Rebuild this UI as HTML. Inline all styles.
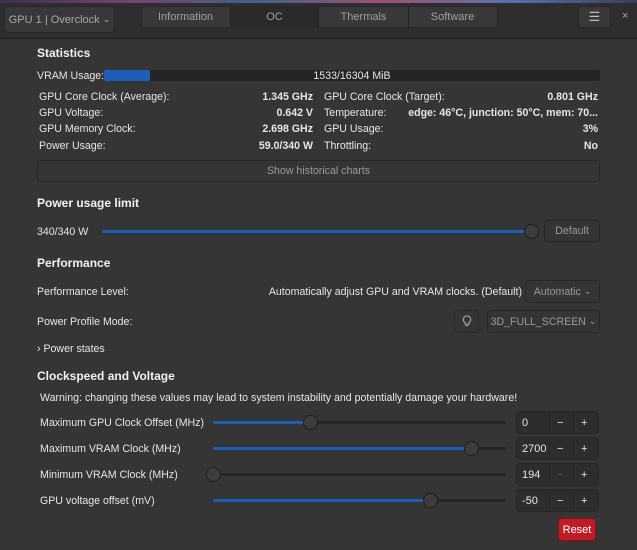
<!DOCTYPE html>
<html><head><meta charset="utf-8"><style>
*{margin:0;padding:0;box-sizing:border-box}
body{width:637px;height:550px;background:#353535;font-family:"Liberation Sans",sans-serif;font-size:10.6px;color:#e6e6e6;position:relative;overflow:hidden}
.a{position:absolute;white-space:nowrap}
.h{font-weight:bold;font-size:12px;color:#f2f2f2}
.b{font-weight:bold}
.r{text-align:right}
.btn{position:absolute;border:1px solid #282828;background:#383838;border-radius:4px;color:#9a9a9a;display:flex;align-items:center;justify-content:center;white-space:nowrap}
.track{position:absolute;height:3px;background:#262626;border-radius:2px}
.fill{position:absolute;height:3px;background:#1c5fb4;border-radius:2px}
.knob{position:absolute;width:15px;height:15px;border-radius:50%;background:#3c3c3c;border:1px solid #1f1f1f}
.spin{position:absolute;left:516px;width:83px;height:23px;background:#2d2d2d;border:1px solid #262626;border-radius:4px}
.spin span{position:absolute;top:5px;font-size:11px}
.spin i{position:absolute;top:0;width:1px;height:21px;background:#262626}
</style></head><body>
<div class="a" style="left:0;top:0;width:637px;height:3px;background:linear-gradient(90deg,#3a3050,#7a4070,#406090,#a05070,#5a70b0,#3a3a60)"></div>
<div class="a" style="left:0;top:3px;width:637px;height:36px;background:#2e2e2e;border-bottom:1px solid #202020"></div>
<div class="btn" style="left:4px;top:6px;width:111px;height:27px;color:#a8a8a8;font-size:11px">GPU 1 | Overclock&nbsp;<span style="font-size:9px">⌄</span></div>
<div class="btn" style="left:141px;top:6px;width:357px;height:22px"></div>
<div class="a" style="left:230px;top:7px;width:89px;height:20px;background:#2a2a2a;border-left:1px solid #242424;border-right:1px solid #242424"></div>
<div class="a" style="left:141px;top:11px;width:89px;text-align:center;color:#a0a0a0;font-size:11px">Information</div>
<div class="a" style="left:230px;top:11px;width:89px;text-align:center;color:#a0a0a0;font-size:11px">OC</div>
<div class="a" style="left:319px;top:11px;width:89px;text-align:center;color:#a0a0a0;font-size:11px">Thermals</div>
<div class="a" style="left:408px;top:11px;width:89px;text-align:center;color:#a0a0a0;font-size:11px">Software</div>
<div class="a" style="left:408px;top:7px;width:1px;height:20px;background:#242424"></div>
<div class="btn" style="left:578px;top:6px;width:33px;height:22px;color:#bbb;font-size:13px">☰</div>
<div class="a" style="left:622px;top:10px;color:#aaa;font-size:11px">×</div>

<div class="a h" style="left:37px;top:46px">Statistics</div>
<div class="a" style="left:37px;top:70px">VRAM Usage:</div>
<div class="a" style="left:104px;top:70px;width:496px;height:11px;background:#252525;border-radius:2px"></div>
<div class="a" style="left:104px;top:70px;width:46px;height:11px;background:#1c5fb4;border-radius:2px"></div>
<div class="a" style="left:104px;top:70px;width:496px;text-align:center">1533/16304 MiB</div>

<div class="a" style="left:39px;top:91px">GPU Core Clock (Average):</div>
<div class="a" style="left:39px;top:107px">GPU Voltage:</div>
<div class="a" style="left:39px;top:123px">GPU Memory Clock:</div>
<div class="a" style="left:39px;top:140px">Power Usage:</div>
<div class="a b r" style="right:324px;top:91px">1.345 GHz</div>
<div class="a b r" style="right:324px;top:107px">0.642 V</div>
<div class="a b r" style="right:324px;top:123px">2.698 GHz</div>
<div class="a b r" style="right:324px;top:140px">59.0/340 W</div>
<div class="a" style="left:324px;top:91px">GPU Core Clock (Target):</div>
<div class="a" style="left:324px;top:107px">Temperature:</div>
<div class="a" style="left:324px;top:123px">GPU Usage:</div>
<div class="a" style="left:324px;top:140px">Throttling:</div>
<div class="a b r" style="right:39px;top:91px">0.801 GHz</div>
<div class="a b r" style="right:39px;top:107px">edge: 46°C, junction: 50°C, mem: 70...</div>
<div class="a b r" style="right:39px;top:123px">3%</div>
<div class="a b r" style="right:39px;top:140px">No</div>
<div class="btn" style="left:37px;top:160px;width:563px;height:22px;background:#353535">Show historical charts</div>

<div class="a h" style="left:37px;top:196px">Power usage limit</div>
<div class="a" style="left:37px;top:226px">340/340 W</div>
<div class="fill" style="left:102px;top:230px;width:428px"></div>
<div class="knob" style="left:524px;top:224px"></div>
<div class="btn" style="left:544px;top:220px;width:56px;height:22px;background:#353535">Default</div>

<div class="a h" style="left:37px;top:256px">Performance</div>
<div class="a" style="left:37px;top:286px">Performance Level:</div>
<div class="a r" style="right:115px;top:286px">Automatically adjust GPU and VRAM clocks. (Default)</div>
<div class="btn" style="left:525px;top:280px;width:75px;height:23px;background:#353535">Automatic&nbsp;<span style="font-size:9px">⌄</span></div>
<div class="a" style="left:37px;top:316px">Power Profile Mode:</div>
<div class="btn" style="left:454px;top:310px;width:25px;height:23px;background:#353535">
<svg width="10" height="13" viewBox="0 0 10 13"><path d="M5 1a3.6 3.6 0 0 0-2 6.6V9h4V7.6A3.6 3.6 0 0 0 5 1zM3.5 10.5h3" fill="none" stroke="#aaa" stroke-width="1.1"/></svg></div>
<div class="btn" style="left:487px;top:310px;width:113px;height:23px;background:#353535">3D_FULL_SCREEN&nbsp;<span style="font-size:9px">⌄</span></div>
<div class="a" style="left:37px;top:343px">› Power states</div>

<div class="a h" style="left:37px;top:369px">Clockspeed and Voltage</div>
<div class="a" style="left:40px;top:392px">Warning: changing these values may lead to system instability and potentially damage your hardware!</div>

<div class="a" style="left:40px;top:417px">Maximum GPU Clock Offset (MHz)</div>
<div class="track" style="left:213px;top:421px;width:293px"></div>
<div class="fill" style="left:213px;top:421px;width:98px"></div>
<div class="knob" style="left:303px;top:415px"></div>
<div class="spin" style="top:411px"><span style="left:5px">0</span><i style="left:32px"></i><i style="left:56px"></i><span style="left:40px">−</span><span style="left:64px">+</span></div>

<div class="a" style="left:40px;top:443px">Maximum VRAM Clock (MHz)</div>
<div class="track" style="left:213px;top:447px;width:293px"></div>
<div class="fill" style="left:213px;top:447px;width:259px"></div>
<div class="knob" style="left:464px;top:441px"></div>
<div class="spin" style="top:437px"><span style="left:5px">2700</span><i style="left:32px"></i><i style="left:56px"></i><span style="left:40px">−</span><span style="left:64px">+</span></div>

<div class="a" style="left:40px;top:469px">Minimum VRAM Clock (MHz)</div>
<div class="track" style="left:213px;top:473px;width:293px"></div>
<div class="knob" style="left:206px;top:467px"></div>
<div class="spin" style="top:463px"><span style="left:5px">194</span><i style="left:32px"></i><i style="left:56px"></i><span style="left:40px;color:#555">−</span><span style="left:64px">+</span></div>

<div class="a" style="left:40px;top:495px">GPU voltage offset (mV)</div>
<div class="track" style="left:213px;top:499px;width:293px"></div>
<div class="fill" style="left:213px;top:499px;width:218px"></div>
<div class="knob" style="left:423px;top:493px"></div>
<div class="spin" style="top:489px"><span style="left:5px">-50</span><i style="left:32px"></i><i style="left:56px"></i><span style="left:40px">−</span><span style="left:64px">+</span></div>

<div class="btn" style="left:558px;top:518px;width:38px;height:23px;background:#c01c28;border-color:#8a1018;color:#fff;font-size:11px">Reset</div>
</body></html>
